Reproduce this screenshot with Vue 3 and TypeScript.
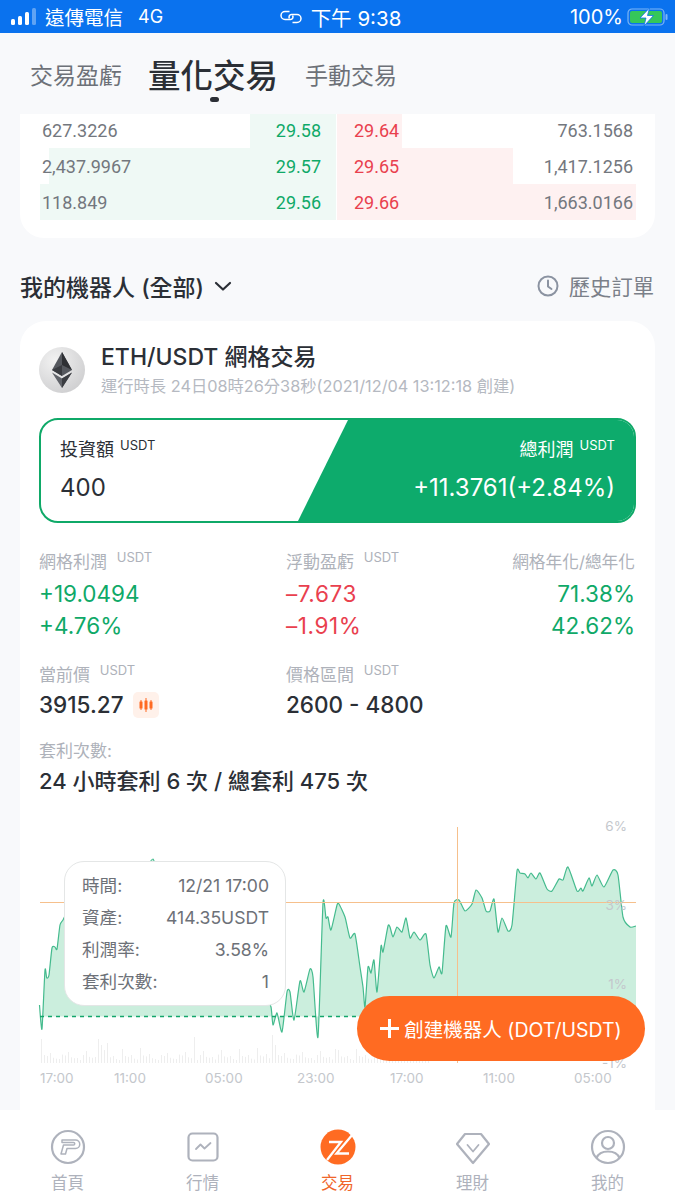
<script setup lang="ts">
import { computed } from 'vue'

interface BookRow {
  buyQty: string
  buyPrice: string
  sellPrice: string
  sellQty: string
  buyDepth: number
  sellDepth: number
}

const book: BookRow[] = [
  { buyQty: '627.3226', buyPrice: '29.58', sellPrice: '29.64', sellQty: '763.1568', buyDepth: 86, sellDepth: 65 },
  { buyQty: '2,437.9967', buyPrice: '29.57', sellPrice: '29.65', sellQty: '1,417.1256', buyDepth: 287, sellDepth: 176 },
  { buyQty: '118.849', buyPrice: '29.56', sellPrice: '29.66', sellQty: '1,663.0166', buyDepth: 296, sellDepth: 299 },
]

/* chart points, in page coords; the svg starts at x=40, y=820 */
const raw: [number, number][] = [
  [39.5, 1005], [42, 1029], [45, 970], [46.7, 978], [49, 975], [52, 948], [55, 947], [57, 949], [60, 925], [63, 920],
  [72, 905], [84, 925], [96, 895], [108, 910], [120, 880], [132, 895], [144, 872], [153, 859], [160, 880], [172, 905],
  [186, 925], [200, 915], [214, 950], [228, 940], [242, 975], [256, 985], [266, 998], [271, 1007], [273, 1025], [277, 1013],
  [282, 1032], [287, 992], [290, 992], [294, 1020], [300, 981], [304, 992], [310, 969], [313, 977], [318, 1037], [323, 903],
  [326, 918], [328, 917], [331, 930], [337, 905], [339, 904], [345, 917], [350, 938], [355, 934], [360, 967], [363, 987],
  [365, 1007], [368, 967], [371, 973], [374, 960], [377, 992], [381, 946], [383, 952], [388, 926], [390, 927], [393, 937],
  [397, 927], [402, 932], [406, 918], [410, 938], [414, 932], [420, 940], [426, 934], [430, 965], [434, 978], [439, 967],
  [442, 973], [446, 926], [451, 937], [454, 903], [459, 900], [465, 911], [472, 904], [476, 890], [482, 898], [486, 911],
  [490, 911], [494, 899], [498, 932], [502, 918], [508, 931], [512, 925], [517, 871], [520, 873], [525, 874], [528, 878],
  [531, 873], [536, 879], [540, 873], [547, 889], [552, 891], [559, 879], [563, 880], [568, 867], [577, 891], [581, 888],
  [583, 891], [589, 878], [592, 886], [597, 875], [604, 887], [613, 870], [618, 875], [623, 917], [630, 927], [636, 926],
]
const points = raw.map(([x, y]) => [x - 40, y - 820] as [number, number])

const linePath = computed(() => {
  let d = `M${points[0][0]} ${points[0][1]}`
  for (let i = 0; i < points.length - 1; i++) {
    const p0 = points[Math.max(0, i - 1)]
    const p1 = points[i]
    const p2 = points[i + 1]
    const p3 = points[Math.min(points.length - 1, i + 2)]
    const k = 0.1
    d += `C${(p1[0] + (p2[0] - p0[0]) * k).toFixed(1)} ${(p1[1] + (p2[1] - p0[1]) * k).toFixed(1)} ${(p2[0] - (p3[0] - p1[0]) * k).toFixed(1)} ${(p2[1] - (p3[1] - p1[1]) * k).toFixed(1)} ${p2[0]} ${p2[1]}`
  }
  return d
})

const areaPath = computed(() => `${linePath.value}L596 196.5L0 196.5Z`)

/* volume bars below the line */
const bars = computed(() => {
  const out: { x: number; h: number }[] = []
  const tall: Record<number, number> = { 0: 24, 19: 24, 20: 18, 22: 20, 51: 26, 77: 28, 78: 18, 98: 14, 115: 24 }
  for (let i = 0; i < 130; i++) {
    const h = tall[i] ?? 3 + ((i * 37) % 13) * (i % 3 === 0 ? 1 : 0.45)
    out.push({ x: i * 3 + 1, h })
  }
  return out
})

const yLabels = [
  { text: '6%', y: 11 },
  { text: '3%', y: 90 },
  { text: '1%', y: 169 },
  { text: '-1%', y: 248 },
]

const xLabels = [
  { text: '17:00', x: 0 },
  { text: '11:00', x: 74 },
  { text: '05:00', x: 165 },
  { text: '23:00', x: 257 },
  { text: '17:00', x: 350 },
  { text: '11:00', x: 443 },
  { text: '05:00', x: 534 },
]

const tooltip = [
  ['時間:', '12/21 17:00'],
  ['資產:', '414.35USDT'],
  ['利潤率:', '3.58%'],
  ['套利次數:', '1'],
]
</script>

<template>
  <div class="page">
    <div class="status">
      <div class="status-left">
        <span class="signal"><i></i><i></i><i></i><i class="off"></i></span>
        <span>遠傳電信</span>
        <span class="net">4G</span>
      </div>
      <div class="status-mid">
        <svg width="24" height="14" viewBox="0 0 24 14" fill="none" stroke="#fff" stroke-width="1.500">
          <path d="M10.500 1.500H6a4 4 0 0 0 0 8h5.500a2.500 2.500 0 0 0 2-4" />
          <path d="M13.500 12.500H18a4 4 0 0 0 0-8h-5.500a2.500 2.500 0 0 0-2 4" />
        </svg>
        <span>下午 9:38</span>
      </div>
      <div class="status-right">
        <span>100%</span>
        <svg width="42" height="20" viewBox="0 0 42 20">
          <rect x="1" y="2" width="36" height="16" rx="4" fill="none" stroke="#7db5f6" stroke-width="1.200" />
          <rect x="3" y="4" width="32" height="12" rx="2" fill="#35c759" />
          <rect x="38.500" y="7" width="2" height="6" rx="1" fill="#7db5f6" />
          <path d="M22.500 1L13 11h6l-2 8 9.500-10.500h-6z" fill="#fff" stroke="#0a72ee" stroke-width="0.800" />
        </svg>
      </div>
    </div>

    <div class="tabs">
      <span class="tab">交易盈虧</span>
      <span class="tab active">量化交易</span>
      <span class="tab">手動交易</span>
    </div>

    <div class="scroll">
      <section class="book">
        <div v-for="row in book" :key="row.buyPrice" class="book-row">
          <div class="side buy">
            <span class="depth" :style="{ width: row.buyDepth + 'px' }"></span>
            <span class="qty">{{ row.buyQty }}</span>
            <span class="price up">{{ row.buyPrice }}</span>
          </div>
          <div class="side sell">
            <span class="depth" :style="{ width: row.sellDepth + 'px' }"></span>
            <span class="price down">{{ row.sellPrice }}</span>
            <span class="qty">{{ row.sellQty }}</span>
          </div>
        </div>
      </section>

      <div class="section-head">
        <div class="section-title">
          <span>我的機器人 (全部)</span>
          <svg width="18" height="12" viewBox="0 0 18 12" fill="none" stroke="#2b2f36" stroke-width="2.200" stroke-linecap="round" stroke-linejoin="round">
            <path d="M2 3l7 6.500L16 3" />
          </svg>
        </div>
        <div class="history">
          <svg width="22" height="22" viewBox="0 0 22 22" fill="none" stroke="#8b93a1" stroke-width="2" stroke-linecap="round" stroke-linejoin="round">
            <circle cx="11" cy="11" r="9.500" />
            <path d="M11 5.500V11.500l3.500 2.500" />
          </svg>
          <span>歷史訂單</span>
        </div>
      </div>

      <section class="bot">
        <div class="bot-head">
          <div class="coin">
            <svg width="20" height="36" viewBox="0 0 20 36">
              <path d="M10 0L0 18l10 6 10-6z" fill="#55585e" />
              <path d="M10 0v13l10 5z" fill="#2e3034" />
              <path d="M0 18l10-5v11z" fill="#3a3c41" />
              <path d="M0 20.500L10 36l10-15.500-10 6z" fill="#5f6268" />
              <path d="M10 26.500V36l10-15.500z" fill="#3a3c41" />
            </svg>
          </div>
          <div>
            <div class="bot-name">ETH/USDT 網格交易</div>
            <div class="bot-meta">運行時長 24日08時26分38秒(2021/12/04 13:12:18 創建)</div>
          </div>
        </div>

        <div class="summary">
          <div class="summary-left">
            <div class="summary-label">投資額 <sup>USDT</sup></div>
            <div class="summary-value">400</div>
          </div>
          <div class="summary-right">
            <div class="summary-label">總利潤 <sup>USDT</sup></div>
            <div class="summary-value">+11.3761(+2.84%)</div>
          </div>
        </div>

        <div class="stats">
          <div class="stat">
            <div class="label">網格利潤 <sup>USDT</sup></div>
            <div class="num up">+19.0494</div>
            <div class="num up">+4.76%</div>
          </div>
          <div class="stat">
            <div class="label">浮動盈虧 <sup>USDT</sup></div>
            <div class="num down">–7.673</div>
            <div class="num down">–1.91%</div>
          </div>
          <div class="stat right">
            <div class="label">網格年化/總年化</div>
            <div class="num up">71.38%</div>
            <div class="num up">42.62%</div>
          </div>
        </div>

        <div class="stats second">
          <div class="stat">
            <div class="label">當前價 <sup>USDT</sup></div>
            <div class="num dark">
              3915.27
              <span class="kline">
                <svg width="16" height="16" viewBox="0 0 16 16" fill="#ff6b22">
                  <rect x="1.500" y="4.500" width="3" height="7" rx="0.500" />
                  <rect x="2.500" y="3" width="1" height="10" />
                  <rect x="6.500" y="3.500" width="3" height="9" rx="0.500" />
                  <rect x="7.500" y="1" width="1" height="14" />
                  <rect x="11.500" y="4.500" width="3" height="7" rx="0.500" />
                  <rect x="12.500" y="3" width="1" height="10" />
                </svg>
              </span>
            </div>
          </div>
          <div class="stat">
            <div class="label">價格區間 <sup>USDT</sup></div>
            <div class="num dark">2600 - 4800</div>
          </div>
          <div class="stat"></div>
        </div>

        <div class="arb">
          <div class="label">套利次數:</div>
          <div class="arb-value">24 小時套利 6 次 / 總套利 475 次</div>
        </div>

        <div class="chart">
          <svg class="chart-svg" width="596" height="270" viewBox="0 0 596 270">
            <rect v-for="b in bars" :key="b.x" :x="b.x" :y="243 - b.h" width="1" :height="b.h" fill="#eeeeee" />
            <path :d="areaPath" fill="#cbeedd" />
            <path :d="linePath" fill="none" stroke="#45bb8e" stroke-width="1.200" />
            <line x1="0" y1="196.500" x2="320" y2="196.500" stroke="#14a66c" stroke-width="1.500" stroke-dasharray="4 4" />
            <line x1="0" y1="82.500" x2="596" y2="82.500" stroke="#f6c08c" stroke-width="1" />
            <line x1="417.500" y1="7" x2="417.500" y2="243" stroke="#f6c08c" stroke-width="1" />
            <text v-for="l in yLabels" :key="l.text" class="axis" x="587" :y="l.y" text-anchor="end">{{ l.text }}</text>
            <text v-for="l in xLabels" :key="l.x" class="axis" :x="l.x" y="263">{{ l.text }}</text>
          </svg>

          <div class="tip">
            <div v-for="t in tooltip" :key="t[0]" class="tip-row">
              <span>{{ t[0] }}</span>
              <span>{{ t[1] }}</span>
            </div>
          </div>

          <button class="create">
            <svg width="19" height="19" viewBox="0 0 19 19" stroke="#fff" stroke-width="3">
              <path d="M9.500 0v19M0 9.500h19" />
            </svg>
            <span>創建機器人 (DOT/USDT)</span>
          </button>
        </div>
      </section>
    </div>

    <nav class="tabbar">
      <div class="nav-item">
        <svg width="36" height="36" viewBox="0 0 36 36" fill="none" stroke="#aeb2bc" stroke-width="2.200">
          <circle cx="18" cy="18" r="16" />
          <path d="M12 11h13.500a3.500 3.500 0 0 1 0 8.500H17l-1.500 5.500h-4.500l2.500-9h10a1 1 0 0 0 0-2.500H12z" stroke-width="1.500" stroke-linejoin="round" />
        </svg>
        <span>首頁</span>
      </div>
      <div class="nav-item">
        <svg width="36" height="36" viewBox="0 0 36 36" fill="none" stroke="#aeb2bc" stroke-width="2.200">
          <rect x="3.500" y="4.500" width="29" height="27" rx="4" />
          <path d="M11 20l4.500-4.500 4 4 6-5.500" stroke-width="1.800" stroke-linecap="round" stroke-linejoin="round" />
        </svg>
        <span>行情</span>
      </div>
      <div class="nav-item active">
        <svg width="36" height="36" viewBox="0 0 36 36">
          <circle cx="18" cy="18" r="17.500" fill="#ff6b22" />
          <path d="M9 13h12L7 31" fill="none" stroke="#fff" stroke-width="2.300" />
          <path d="M33 5L16.500 24.500H29" fill="none" stroke="#fff" stroke-width="2.300" />
        </svg>
        <span>交易</span>
      </div>
      <div class="nav-item">
        <svg width="36" height="36" viewBox="0 0 36 36" fill="none" stroke="#aeb2bc" stroke-width="2.200" stroke-linejoin="round">
          <path d="M10 5h16l8 10-16 19L2 15z" />
          <path d="M12.500 16l5.500 6.500 5.500-6.500" stroke-linecap="round" stroke-width="1.800" />
        </svg>
        <span>理財</span>
      </div>
      <div class="nav-item">
        <svg width="36" height="36" viewBox="0 0 36 36" fill="none" stroke="#aeb2bc" stroke-width="2.200">
          <circle cx="18" cy="18" r="16" />
          <circle cx="18" cy="14" r="6" />
          <path d="M6.500 29c2-5 6-6.500 11.500-6.500s9.500 1.500 11.500 6.500" />
        </svg>
        <span>我的</span>
      </div>
    </nav>
  </div>
</template>

<style>
body {
  margin: 0;
  background: #f8f9fb;
}
</style>

<style scoped>
.page {
  width: 675px;
  height: 1200px;
  display: flex;
  flex-direction: column;
  overflow: hidden;
  background: #f8f9fb;
  color: #2b2f36;
  font-family: Inter, "Noto Sans CJK TC", sans-serif;
}

.status {
  height: 33px;
  flex: none;
  display: grid;
  grid-template-columns: 1fr auto 1fr;
  align-items: center;
  padding: 0 6px 0 11px;
  background: #0a72ee;
  color: #fff;
  font-size: 19.500px;
}
.status-left,
.status-mid,
.status-right {
  display: flex;
  align-items: center;
}
.status-left { gap: 9px; }
.status-left .net { margin-left: 6px; font-size: 18px; }
.status-mid { gap: 8px; font-size: 20.500px; }
.status-right { justify-content: flex-end; gap: 4px; font-size: 20px; }
.signal {
  display: flex;
  align-items: flex-end;
  gap: 3px;
  height: 17px;
}
.signal i {
  width: 4px;
  border-radius: 1.500px;
  background: #fff;
}
.signal i:nth-child(1) { height: 6px; }
.signal i:nth-child(2) { height: 9px; }
.signal i:nth-child(3) { height: 13px; }
.signal i:nth-child(4) { height: 17px; }
.signal i.off { background: rgba(255, 255, 255, 0.35); }

.tabs {
  height: 81px;
  flex: none;
  box-sizing: border-box;
  display: flex;
  align-items: center;
  gap: 26px;
  padding: 0 30px;
  font-size: 23px;
  color: #6d7178;
}
.tab:last-child { margin-left: 1px; }
.tab.active {
  position: relative;
  font-size: 32.500px;
  font-weight: 500;
  color: #2b2f36;
}
.tab.active::after {
  content: "";
  position: absolute;
  left: 62px;
  bottom: -5px;
  width: 9px;
  height: 5px;
  border-radius: 3px;
  background: #2b2f36;
}

.scroll {
  flex: 1;
  min-height: 0;
  overflow: hidden;
}

.book {
  margin: 0 20px;
  padding: 0 20px 18px;
  background: #fff;
  border-radius: 0 0 24px 24px;
}
.book-row {
  display: grid;
  grid-template-columns: 296px 299px;
  gap: 1px;
  height: 36px;
}
.book-row:first-child {
  height: 34px;
}
.book-row:first-child .side span:not(.depth) {
  top: -1px;
}
.side {
  position: relative;
  display: flex;
  align-items: center;
  justify-content: space-between;
  font-family: Roboto, sans-serif;
  font-size: 18px;
}
.side span:not(.depth) { position: relative; }
.depth {
  position: absolute;
  top: 0;
  bottom: 0;
}
.buy .depth { right: 0; background: #eff9f5; }
.sell .depth { left: 0; background: #fef1f1; }
.qty { color: #73777e; padding: 0 2px; }
.sell .qty { padding-right: 3px; }
.buy .price { margin-right: 15px; }
.sell .price { margin-left: 17px; }
.up { color: #0fa968; }
.down { color: #e9404e; }

.section-head {
  height: 83px;
  box-sizing: border-box;
  display: flex;
  align-items: center;
  justify-content: space-between;
  padding: 17px 21px 5px 20px;
}
.section-title {
  display: flex;
  align-items: center;
  gap: 10px;
  font-size: 23px;
  font-weight: 500;
}
.history {
  display: flex;
  align-items: center;
  gap: 10px;
  font-size: 21.300px;
  color: #7b8089;
}

.bot {
  margin: 0 20px;
  padding: 19px 19px 0 19px;
  background: #fff;
  border-radius: 26px 26px 0 0;
}
.bot-head {
  display: flex;
  align-items: center;
  gap: 16px;
  height: 60px;
}
.coin {
  width: 46px;
  height: 46px;
  flex: none;
  display: flex;
  align-items: center;
  justify-content: center;
  border-radius: 50%;
  background: radial-gradient(circle at 35% 30%, #f2f2f2, #c6c6c8);
}
.bot-name {
  font-size: 23px;
  line-height: 32px;
  font-weight: 500;
}
.bot-meta {
  font-size: 16.300px;
  line-height: 26px;
  color: #b5b9c1;
  white-space: nowrap;
}

.summary {
  position: relative;
  margin-top: 18px;
  height: 105px;
  box-sizing: border-box;
  display: flex;
  justify-content: space-between;
  padding: 18px 19px 0 19px;
  border: 2px solid #0fa968;
  border-radius: 19px;
  overflow: hidden;
}
.summary::before {
  content: "";
  position: absolute;
  inset: 0;
  background: #0dab6c;
  clip-path: polygon(307px 0, 100% 0, 100% 100%, 257px 100%);
}
.summary-left,
.summary-right { position: relative; }
.summary-right { text-align: right; color: #fff; }
.summary-label { font-size: 18px; line-height: 24px; }
.summary-value { margin-top: 10px; font-size: 24px; line-height: 32px; }

sup {
  font-size: 13px;
  line-height: 0;
  margin-left: 5px;
  vertical-align: 6px;
}
.summary sup { margin-left: 1px; }

.stats {
  display: grid;
  grid-template-columns: 247px 1fr auto;
  margin-top: 25px;
}
.stats.second { margin-top: 19px; }
.stat.right { text-align: right; padding-right: 1px; }
.stat.right .label { font-size: 16.700px; }
.label {
  font-size: 17px;
  line-height: 28px;
  color: #aeb2ba;
  margin-bottom: 2px;
}
.num {
  font-size: 22.500px;
  line-height: 32px;
}
.num.down { letter-spacing: 0.6px; }
.dark {
  display: flex;
  align-items: center;
  gap: 9px;
  line-height: 34px;
  font-weight: 500;
  margin-top: -3px;
  color: #2b2f36;
}
.kline {
  width: 26px;
  height: 26px;
  display: flex;
  align-items: center;
  justify-content: center;
  border-radius: 5px;
  background: #fff1ea;
}

.arb { margin-top: 15px; }
.arb .label { margin-bottom: 0; }
.arb-value {
  font-size: 22px;
  line-height: 32px;
  font-weight: 500;
}

.chart {
  position: relative;
  height: 290px;
  margin-top: 23px;
  padding-left: 1px;
}
.chart-svg { display: block; overflow: visible; }
.axis {
  font-size: 13.500px;
  fill: #c4c7cc;
}

.tip {
  position: absolute;
  left: 25px;
  top: 41px;
  width: 222px;
  height: 145px;
  box-sizing: border-box;
  padding: 8px 16px 0 17px;
  background: #fff;
  border: 1px solid #e4e6e6;
  border-radius: 20px;
  color: #6d7178;
  font-size: 17.600px;
}
.tip-row {
  display: flex;
  justify-content: space-between;
  line-height: 32px;
}

.create {
  position: absolute;
  left: 318px;
  top: 176px;
  width: 288px;
  height: 65px;
  display: flex;
  align-items: center;
  justify-content: center;
  gap: 5px;
  border: 0;
  border-radius: 33px;
  background: #ff6b22;
  color: #fff;
  font-family: inherit;
  font-size: 19.500px;
}

.tabbar {
  height: 90px;
  flex: none;
  display: grid;
  grid-template-columns: repeat(5, 135px);
  background: #fff;
}
.nav-item {
  display: flex;
  flex-direction: column;
  align-items: center;
  padding-top: 19px;
  font-size: 16.500px;
  color: #aeb2bc;
}
.nav-item span { margin-top: 7px; line-height: 22px; }
.nav-item.active { color: #f0662a; }
</style>
